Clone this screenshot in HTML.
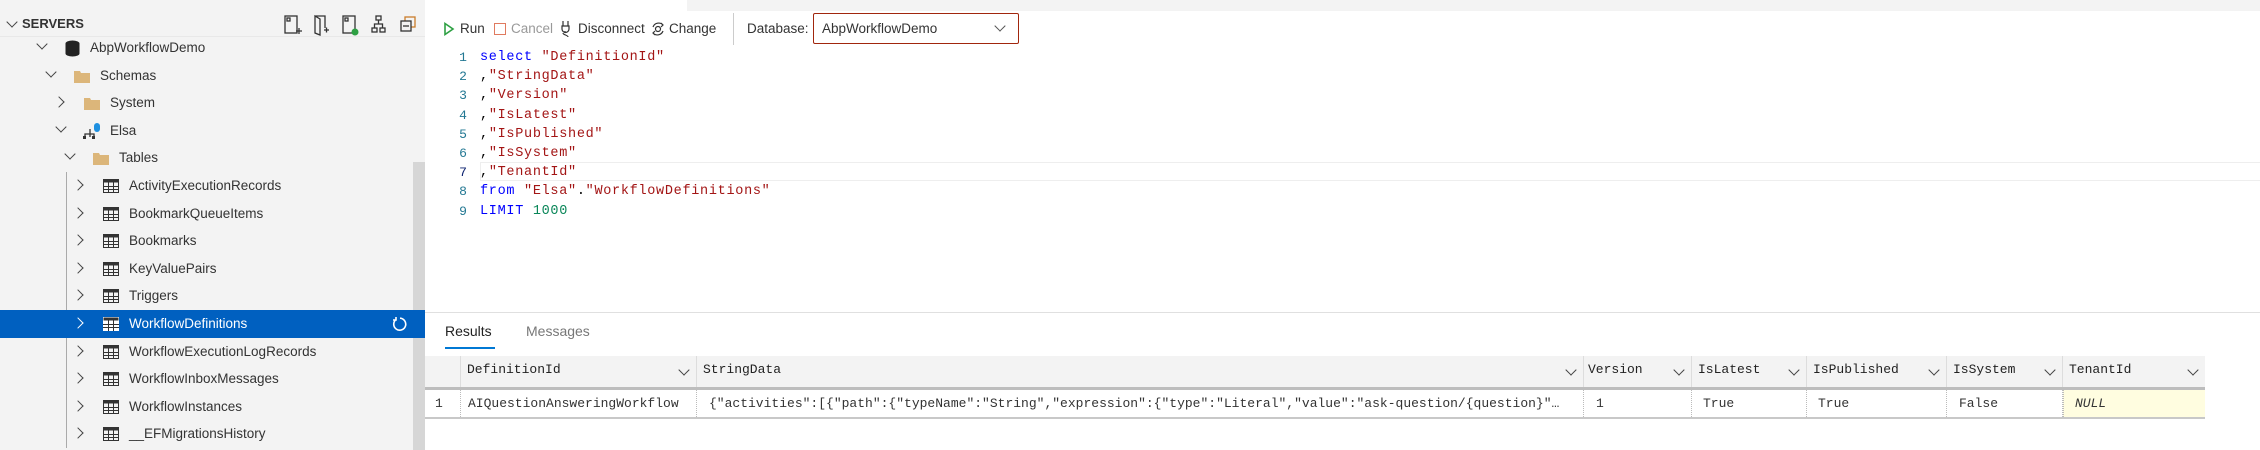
<!DOCTYPE html>
<html><head><meta charset="utf-8"><style>
*{margin:0;padding:0;box-sizing:border-box}
body{width:2260px;height:450px;background:#fff;position:relative;overflow:hidden;font-family:"Liberation Sans",sans-serif;color:#333}
.a{position:absolute;white-space:nowrap}
#side{position:absolute;left:0;top:0;width:425px;height:450px;background:#f3f3f3}
.row{position:absolute;left:0;width:425px;height:28px;font-size:13.5px;line-height:28px}
.chev{position:absolute;top:9px;width:8px;height:8px;border-right:1.3px solid #444;border-bottom:1.3px solid #444}
.cr{transform:rotate(-45deg)}
.cd{transform:rotate(45deg);top:6px}
.code{position:absolute;left:480px;font-size:13.5px;letter-spacing:0.7px;font-family:"Liberation Mono",monospace;color:#a31515}
.ln{position:absolute;left:455px;width:16px;text-align:center;font-size:13px;font-family:"Liberation Mono",monospace;color:#237893}
.k{color:#0000ff}.n{color:#098658}.p{color:#000}
.hc{position:absolute;top:356px;height:31px;background:#f3f3f3;border-right:1px solid #ddd;font-family:"Liberation Mono",monospace;font-size:13px;line-height:28px;padding-left:6px;color:#222}
.dc{position:absolute;top:390px;height:27px;border-right:1px dotted #bbb;font-family:"Liberation Mono",monospace;font-size:13px;line-height:28px;padding-left:8px;color:#333;overflow:hidden}
.hv{position:absolute;right:8px;top:10px;width:8px;height:8px;border-right:1.3px solid #444;border-bottom:1.3px solid #444;transform:rotate(45deg)}
</style></head><body>
<div id="side">
 <div class="a" style="left:0;top:0;width:425px;height:37px;background:#f3f3f3;border-bottom:1px solid #e8e8e8"></div>
 <div class="chev cd" style="left:8px;top:18px"></div>
 <div class="a" style="left:22px;top:16px;font-size:13px;font-weight:bold;color:#333">SERVERS</div>
 <svg class="a" style="left:282px;top:14px" width="140" height="22" viewBox="0 0 140 22" fill="none" stroke="#333" stroke-width="1.3">
  <rect x="3" y="2" width="12" height="17"/><rect x="5" y="4" width="3" height="3"/><path d="M14 17h6M17 14v6"/>
  <path d="M33 2h10v12M33 2l5 3v16l-5-2z M42 16h5M44.5 13.5v5"/>
  <rect x="61" y="2" width="12" height="17"/><rect x="63" y="4" width="3" height="3"/>
  <circle cx="73" cy="18" r="3.5" fill="#2ea043" stroke="none"/>
  <rect x="94" y="2" width="5" height="4"/><rect x="90" y="14" width="5" height="4"/><rect x="98" y="14" width="5" height="4"/><path d="M96.5 6v4M92.5 14v-4h8v4"/>
  <rect x="123" y="3" width="10" height="10" stroke="#c97c2a"/><rect x="119" y="7" width="10" height="10" fill="#f3f3f3"/><path d="M121 12h6"/>
 </svg>
 <div class="row" style="top:34px"><div class="chev cd" style="left:38px"></div>
  <svg class="a" style="left:65px;top:6px" width="15" height="17"><ellipse cx="7.5" cy="3.5" rx="7" ry="3" fill="#222"/><rect x="0.5" y="3.5" width="14" height="10" fill="#222"/><ellipse cx="7.5" cy="13.5" rx="7" ry="3" fill="#222"/></svg>
  <span class="a" style="left:90px">AbpWorkflowDemo</span></div>
 <div class="row" style="top:62px"><div class="chev cd" style="left:47px"></div>
  <svg class="a" style="left:74px;top:7px" width="16" height="14"><path d="M0 2h6l1 2h9v10H0z" fill="#dcb67a"/></svg>
  <span class="a" style="left:100px">Schemas</span></div>
 <div class="row" style="top:89px"><div class="chev cr" style="left:55px"></div>
  <svg class="a" style="left:84px;top:7px" width="16" height="14"><path d="M0 2h6l1 2h9v10H0z" fill="#dcb67a"/></svg>
  <span class="a" style="left:110px">System</span></div>
 <div class="row" style="top:117px"><div class="chev cd" style="left:57px"></div>
  <svg class="a" style="left:83px;top:5px" width="18" height="18"><rect x="11" y="1" width="6" height="9" rx="3" fill="#1e90e0"/><path d="M7 7v4M2 15v-3h9v3M7 11v4" stroke="#333" stroke-width="1.3" fill="none"/><rect x="0" y="14" width="3" height="3" fill="#333"/><rect x="9" y="14" width="3" height="3" fill="#333"/></svg>
  <span class="a" style="left:110px">Elsa</span></div>
 <div class="row" style="top:144px"><div class="chev cd" style="left:66px"></div>
  <svg class="a" style="left:93px;top:7px" width="16" height="14"><path d="M0 2h6l1 2h9v10H0z" fill="#dcb67a"/></svg>
  <span class="a" style="left:119px">Tables</span></div>
 <div class="a" style="left:66px;top:172px;width:1px;height:276px;background:#aaa"></div>
 <div class="a" style="left:413px;top:162px;width:12px;height:288px;background:#d6d6d6"></div>
 <div id="tbls"></div>
</div>
<div class="a" style="left:687px;top:0;width:1573px;height:11px;background:#f3f3f3"></div>
<svg class="a" style="left:443px;top:22px" width="12" height="14"><path d="M2 1.5l8 5.5-8 5.5z" fill="none" stroke="#2ea043" stroke-width="1.6"/></svg>
<div class="a" style="left:460px;top:21px;font-size:13.5px">Run</div>
<div class="a" style="left:494px;top:23px;width:12px;height:12px;border:1.5px solid #e07a5f"></div>
<div class="a" style="left:511px;top:21px;font-size:13.5px;color:#999">Cancel</div>
<svg class="a" style="left:560px;top:20px" width="12" height="18" fill="none" stroke="#333" stroke-width="1.2"><path d="M3 1v5M8 1v5M2 6h7v3a3 3 0 0 1-7 0z M5 11v2 M3 13c0 2 5 2 5 4"/></svg>
<div class="a" style="left:578px;top:21px;font-size:13.5px">Disconnect</div>
<svg class="a" style="left:650px;top:21px" width="16" height="16" fill="none" stroke="#333" stroke-width="1.2"><path d="M3 6a6 6 0 0 1 10-2M13 10a6 6 0 0 1-10 2M11 2l2 2-2 2M5 14l-2-2 2-2"/><circle cx="8" cy="8" r="2.5"/></svg>
<div class="a" style="left:669px;top:21px;font-size:13.5px">Change</div>
<div class="a" style="left:733px;top:13px;width:1px;height:32px;background:#ccc"></div>
<div class="a" style="left:747px;top:21px;font-size:13.5px">Database:</div>
<div class="a" style="left:813px;top:13px;width:206px;height:31px;border:1px solid #a1260d;border-radius:2px;background:#fff"></div>
<div class="a" style="left:822px;top:21px;font-size:13.5px">AbpWorkflowDemo</div>
<div class="a" style="left:996px;top:22px;width:8px;height:8px;border-right:1.2px solid #555;border-bottom:1.2px solid #555;transform:rotate(45deg)"></div>
<div class="a" style="left:480px;top:162px;width:1780px;height:19px;border:1.5px solid #eee;border-right:none"></div>
<div class="ln" style="top:48px;line-height:19.2px">1<br>2<br>3<br>4<br>5<br>6<br><span style="color:#0b216f">7</span><br>8<br>9</div>
<div class="code" style="top:48px;line-height:19.2px"><span class="k">select</span> "DefinitionId"<br><span class="p">,</span>"StringData"<br><span class="p">,</span>"Version"<br><span class="p">,</span>"IsLatest"<br><span class="p">,</span>"IsPublished"<br><span class="p">,</span>"IsSystem"<br><span class="p">,</span>"TenantId"<br><span class="k">from</span> "Elsa"<span class="p">.</span>"WorkflowDefinitions"<br><span class="k">LIMIT</span> <span class="n">1000</span></div>
<div class="a" style="left:425px;top:312px;width:1835px;height:1px;background:#e0e0e0"></div>
<div class="a" style="left:445px;top:323px;font-size:14px;color:#222">Results</div>
<div class="a" style="left:445px;top:347px;width:50px;height:2px;background:#0078d4"></div>
<div class="a" style="left:526px;top:323px;font-size:14px;color:#777">Messages</div>
<div class="hc" style="left:425px;width:36px"></div>
<div class="hc" style="left:461px;width:236px">DefinitionId<div class="hv"></div></div>
<div class="hc" style="left:697px;width:887px">StringData<div class="hv"></div></div>
<div class="hc" style="left:1584px;width:108px;padding-left:4px">Version<div class="hv"></div></div>
<div class="hc" style="left:1692px;width:115px">IsLatest<div class="hv"></div></div>
<div class="hc" style="left:1807px;width:140px">IsPublished<div class="hv"></div></div>
<div class="hc" style="left:1947px;width:116px">IsSystem<div class="hv"></div></div>
<div class="hc" style="left:2063px;width:142px;border-right:none">TenantId<div class="hv"></div></div>
<div class="a" style="left:425px;top:387px;width:1780px;height:3px;background:#bdbdbd"></div>
<div class="dc" style="left:425px;width:36px;padding-left:10px">1</div>
<div class="dc" style="left:461px;width:236px;padding-left:7px">AIQuestionAnsweringWorkflow</div>
<div class="dc" style="left:697px;width:887px;padding-left:12px">{"activities":[{"path":{"typeName":"String","expression":{"type":"Literal","value":"ask-question/{question}"…</div>
<div class="dc" style="left:1584px;width:108px;padding-left:12px">1</div>
<div class="dc" style="left:1692px;width:115px;padding-left:11px">True</div>
<div class="dc" style="left:1807px;width:140px;padding-left:11px">True</div>
<div class="dc" style="left:1947px;width:116px;padding-left:12px">False</div>
<div class="dc" style="left:2063px;width:142px;padding-left:11px;background:#fffde0;font-style:italic;border-right:none;border-left:1px dotted #bbb">NULL</div>
<div class="a" style="left:425px;top:417px;width:1780px;height:1.5px;background:#c8c8c8"></div>
<script>
var t=["ActivityExecutionRecords","BookmarkQueueItems","Bookmarks","KeyValuePairs","Triggers","WorkflowDefinitions","WorkflowExecutionLogRecords","WorkflowInboxMessages","WorkflowInstances","__EFMigrationsHistory"];
var h="";
for(var i=0;i<t.length;i++){var y=172+i*27.6;var s=i==5;
h+='<div class="row" style="top:'+y+'px;'+(s?'background:#0060c0;color:#fff;height:28px':'')+'"><div class="chev cr" style="left:74px;border-color:'+(s?'#fff':'#444')+'"></div>'+
'<svg class="a" style="left:103px;top:7px" width="16" height="14"><rect x="0.5" y="0.5" width="15" height="13" fill="'+(s?'#fff':'none')+'" stroke="'+(s?'#fff':'#333')+'"/><rect x="0.5" y="0.5" width="15" height="3" fill="#333"/><path d="M5.5 3v11M10.5 3v11M0 7.5h16M0 10.5h16" stroke="#333"/></svg>'+
'<span class="a" style="left:129px">'+t[i]+'</span>'+(s?'<svg class="a" style="left:391px;top:6px" width="16" height="16" fill="none" stroke="#fff" stroke-width="1.6"><path d="M5 3.5A6 6 0 1 0 9 2.2M5 1v3h-3"/></svg>':'')+'</div>';}
document.getElementById("tbls").innerHTML=h;
</script>
</body></html>
